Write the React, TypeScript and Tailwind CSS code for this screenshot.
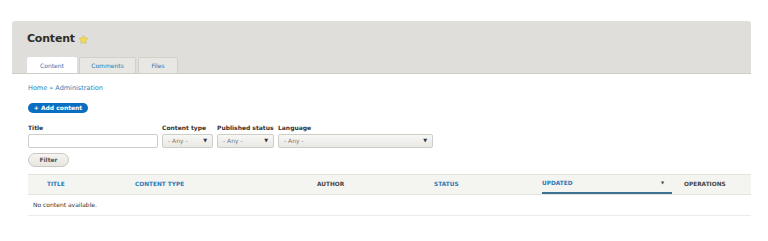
import { FaStar } from "react-icons/fa";

const font = { fontFamily: '"DejaVu Sans", "Liberation Sans", sans-serif' };

const Select = ({ width }: { width: string }) => (
  <div
    className={`${width} h-[14px] flex items-center justify-between px-[5px] border border-[#cfcdc7] rounded-[2px] bg-gradient-to-b from-[#f7f7f5] to-[#e9e8e4] text-[6px] text-[#777]`}
  >
    <span>- Any -</span>
    <span className="text-[5px] text-[#333]">▼</span>
  </div>
);

const App = () => {
  return (
    <div className="w-[768px] h-[241px] bg-white pt-[21px] pl-[12px] pr-[17px]" style={font}>
      <div className="bg-[#dfdeda] rounded-t-[3px] px-[15px] border-b border-[#cfcdc8]">
        <div className="flex items-center h-[36px] gap-[4px]">
          <h1 className="text-[11px] font-bold text-[#2e2d2a] tracking-[-0.2px]">Content</h1>
          <FaStar className="text-[#f1d95a] w-[9px] h-[9px] stroke-[#b8a23d]" style={{ strokeWidth: 20 }} />
        </div>
        <div className="flex gap-[2px] h-[16px] items-end">
          <div className="w-[50px] h-[16px] bg-white rounded-t-[2px] flex items-center justify-center text-[6px] text-[#2a78b5]">
            Content
          </div>
          <div className="w-[57px] h-[16px] bg-[#e8e7e3] border border-b-0 border-[#d2d0ca] rounded-t-[2px] flex items-center justify-center text-[6px] text-[#2a78b5]">
            Comments
          </div>
          <div className="w-[40px] h-[16px] bg-[#e8e7e3] border border-b-0 border-[#d2d0ca] rounded-t-[2px] flex items-center justify-center text-[6px] text-[#2a78b5]">
            Files
          </div>
        </div>
      </div>

      <div className="pl-[16px]">
        <div className="mt-[10px] text-[6.5px] text-[#2d7fb8]">Home » Administration</div>

        <button className="mt-[9px] w-[60px] h-[10px] rounded-full bg-[#0a6fc0] text-white text-[6px] font-bold flex items-center justify-center">
          + Add content
        </button>

        <div className="flex gap-[4px] mt-[10px]">
          <div className="flex flex-col gap-[2px]">
            <label className="text-[6px] font-bold text-[#333]">Title</label>
            <div className="w-[130px] h-[14px] border border-[#cfcdc7] bg-white rounded-[2px]" />
          </div>
          <div className="flex flex-col gap-[2px]">
            <label className="text-[6px] font-bold text-[#333]">Content type</label>
            <Select width="w-[51px]" />
          </div>
          <div className="flex flex-col gap-[2px]">
            <label className="text-[6px] font-bold text-[#333]">Published status</label>
            <Select width="w-[57px]" />
          </div>
          <div className="flex flex-col gap-[2px]">
            <label className="text-[6px] font-bold text-[#333]">Language</label>
            <Select width="w-[155px]" />
          </div>
        </div>

        <button className="mt-[5px] w-[41px] h-[14px] rounded-full border border-[#cac8c1] bg-gradient-to-b from-[#f6f5f1] to-[#e6e5df] text-[6px] font-bold text-[#555] flex items-center justify-center">
          Filter
        </button>

        <div className="mt-[7px]">
          <div className="grid grid-cols-[107px_182px_117px_108px_142px_1fr] h-[21px] items-center bg-[#f4f4f1] border-t border-b border-[#e5e3de] text-[5.8px] font-bold uppercase">
            <span className="pl-[19px] text-[#2a78b5]">Title</span>
            <span className="text-[#2a78b5]">Content type</span>
            <span className="text-[#444]">Author</span>
            <span className="text-[#2a78b5]">Status</span>
            <span className="w-[130px] h-full flex items-center justify-between border-b-[2px] border-[#3d7290] text-[#2a78b5]">
              <span>Updated</span>
              <span className="text-[4px] text-[#444] pr-[8px]">▼</span>
            </span>
            <span className="text-[#444]">Operations</span>
          </div>
          <div className="h-[21px] flex items-center pl-[5px] border-b border-[#ecebe7] text-[6px] text-[#333]">
            No content available.
          </div>
        </div>
      </div>
    </div>
  );
};

export default App;
